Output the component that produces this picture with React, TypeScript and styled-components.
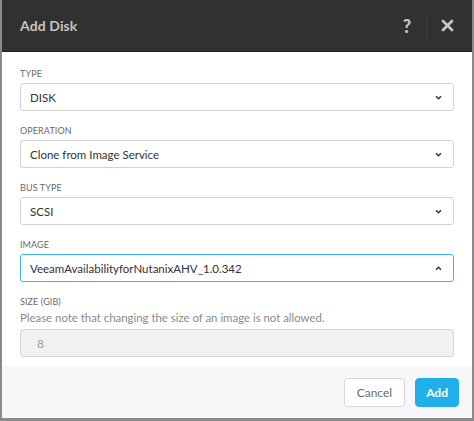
import React from "react";
import styled, { createGlobalStyle } from "styled-components";

const GlobalStyle = createGlobalStyle`
  html, body {
    margin: 0;
    padding: 0;
    background: #ffffff;
  }
  body {
    font-family: Lato, "Open Sans", "Liberation Sans", sans-serif;
  }
`;

const Frame = styled.div`
  width: 474px;
  height: 421px;
  background: #8a8a8a;
  padding: 0 2px 3px 2px;
  box-sizing: border-box;
`;

const Dialog = styled.div`
  height: 100%;
  background: #ffffff;
  display: flex;
  flex-direction: column;
`;

const Header = styled.div`
  height: 52px;
  flex: none;
  background: #313131;
  border-bottom: 1px solid #222;
  box-sizing: border-box;
  display: flex;
  align-items: center;
  padding: 0 18px 0 18px;
`;

const Title = styled.h1`
  margin: 0;
  flex: 1;
  font-size: 14px;
  font-weight: 700;
  color: #c4c4c4;
  letter-spacing: 0.1px;
`;

const HeaderButton = styled.button`
  background: none;
  border: none;
  padding: 0;
  color: #c4c4c4;
  font-family: inherit;
  font-size: 18px;
  font-weight: 900;
  cursor: pointer;
  display: flex;
  align-items: center;
`;

const HeaderDivider = styled.span`
  width: 1px;
  height: 24px;
  background: #3e3e3e;
  margin: 0 14px 0 15px;
`;

const Body = styled.div`
  flex: 1;
  padding: 16px 18px 0 18px;
  display: flex;
  flex-direction: column;
`;

const Field = styled.div<{ gap?: number }>`
  display: flex;
  flex-direction: column;
  margin-bottom: ${(p) => p.gap ?? 14}px;
`;

const Label = styled.label`
  font-size: 9px;
  color: #6a6a6a;
  text-transform: uppercase;
  letter-spacing: 0.1px;
  margin-bottom: 3px;
  line-height: 12px;
`;

const Note = styled.div`
  font-size: 11.4px;
  color: #8a8a8a;
  margin: 0 0 4px 0;
  line-height: 14px;
`;

const SelectBox = styled.div<{ focused?: boolean }>`
  height: 28px;
  box-sizing: border-box;
  border: 1px solid ${(p) => (p.focused ? "#3fb4ec" : "#d3d3d3")};
  border-radius: 3px;
  background: #fff;
  display: flex;
  align-items: center;
  padding: 0 11px 0 9px;
  font-size: 11.5px;
  color: #333;
`;

const SelectText = styled.span`
  flex: 1;
`;

const DisabledInput = styled.div`
  height: 28px;
  box-sizing: border-box;
  border: 1px solid #d6d6d6;
  border-radius: 3px;
  background: #f1f1f2;
  display: flex;
  align-items: center;
  padding: 0 16px;
  font-size: 12px;
  color: #9a9a9a;
`;

const Footer = styled.div`
  height: 52px;
  flex: none;
  background: #f7f7f9;
  display: flex;
  align-items: center;
  justify-content: flex-end;
  gap: 10px;
  padding: 0 13px;
`;

const Button = styled.button<{ primary?: boolean }>`
  height: 29px;
  border-radius: 4px;
  font-family: inherit;
  font-size: 12px;
  cursor: pointer;
  padding: 0 ${(p) => (p.primary ? 10 : 12)}px;
  border: 1px solid ${(p) => (p.primary ? "#1fb0ea" : "#d9d9d9")};
  background: ${(p) => (p.primary ? "#1fb0ea" : "#ffffff")};
  color: ${(p) => (p.primary ? "#ffffff" : "#6b6b6b")};
  font-weight: ${(p) => (p.primary ? 700 : 400)};
`;

function Chevron({ up }: { up?: boolean }) {
  return (
    <svg width="7" height="5" viewBox="0 0 7 5">
      <path
        d={up ? "M1 3.8 L3.5 1.3 L6 3.8" : "M1 1.2 L3.5 3.7 L6 1.2"}
        fill="none"
        stroke="#333"
        strokeWidth="1.5"
      />
    </svg>
  );
}

function Select({ value, focused }: { value: string; focused?: boolean }) {
  return (
    <SelectBox focused={focused}>
      <SelectText>{value}</SelectText>
      <Chevron up={focused} />
    </SelectBox>
  );
}

export default function App() {
  return (
    <>
      <GlobalStyle />
      <Frame>
        <Dialog>
          <Header>
            <Title>Add Disk</Title>
            <HeaderButton>?</HeaderButton>
            <HeaderDivider />
            <HeaderButton>
              <svg width="13" height="13" viewBox="0 0 13 13">
                <path
                  d="M2 2 L11 11 M11 2 L2 11"
                  stroke="#c4c4c4"
                  strokeWidth="2.8"
                  strokeLinecap="round"
                />
              </svg>
            </HeaderButton>
          </Header>
          <Body>
            <Field>
              <Label>Type</Label>
              <Select value="DISK" />
            </Field>
            <Field>
              <Label>Operation</Label>
              <Select value="Clone from Image Service" />
            </Field>
            <Field>
              <Label>Bus Type</Label>
              <Select value="SCSI" />
            </Field>
            <Field>
              <Label>Image</Label>
              <Select value="VeeamAvailabilityforNutanixAHV_1.0.342" focused />
            </Field>
            <Field gap={8}>
              <Label>Size (GiB)</Label>
              <Note>Please note that changing the size of an image is not allowed.</Note>
              <DisabledInput>8</DisabledInput>
            </Field>
          </Body>
          <Footer>
            <Button>Cancel</Button>
            <Button primary>Add</Button>
          </Footer>
        </Dialog>
      </Frame>
    </>
  );
}
